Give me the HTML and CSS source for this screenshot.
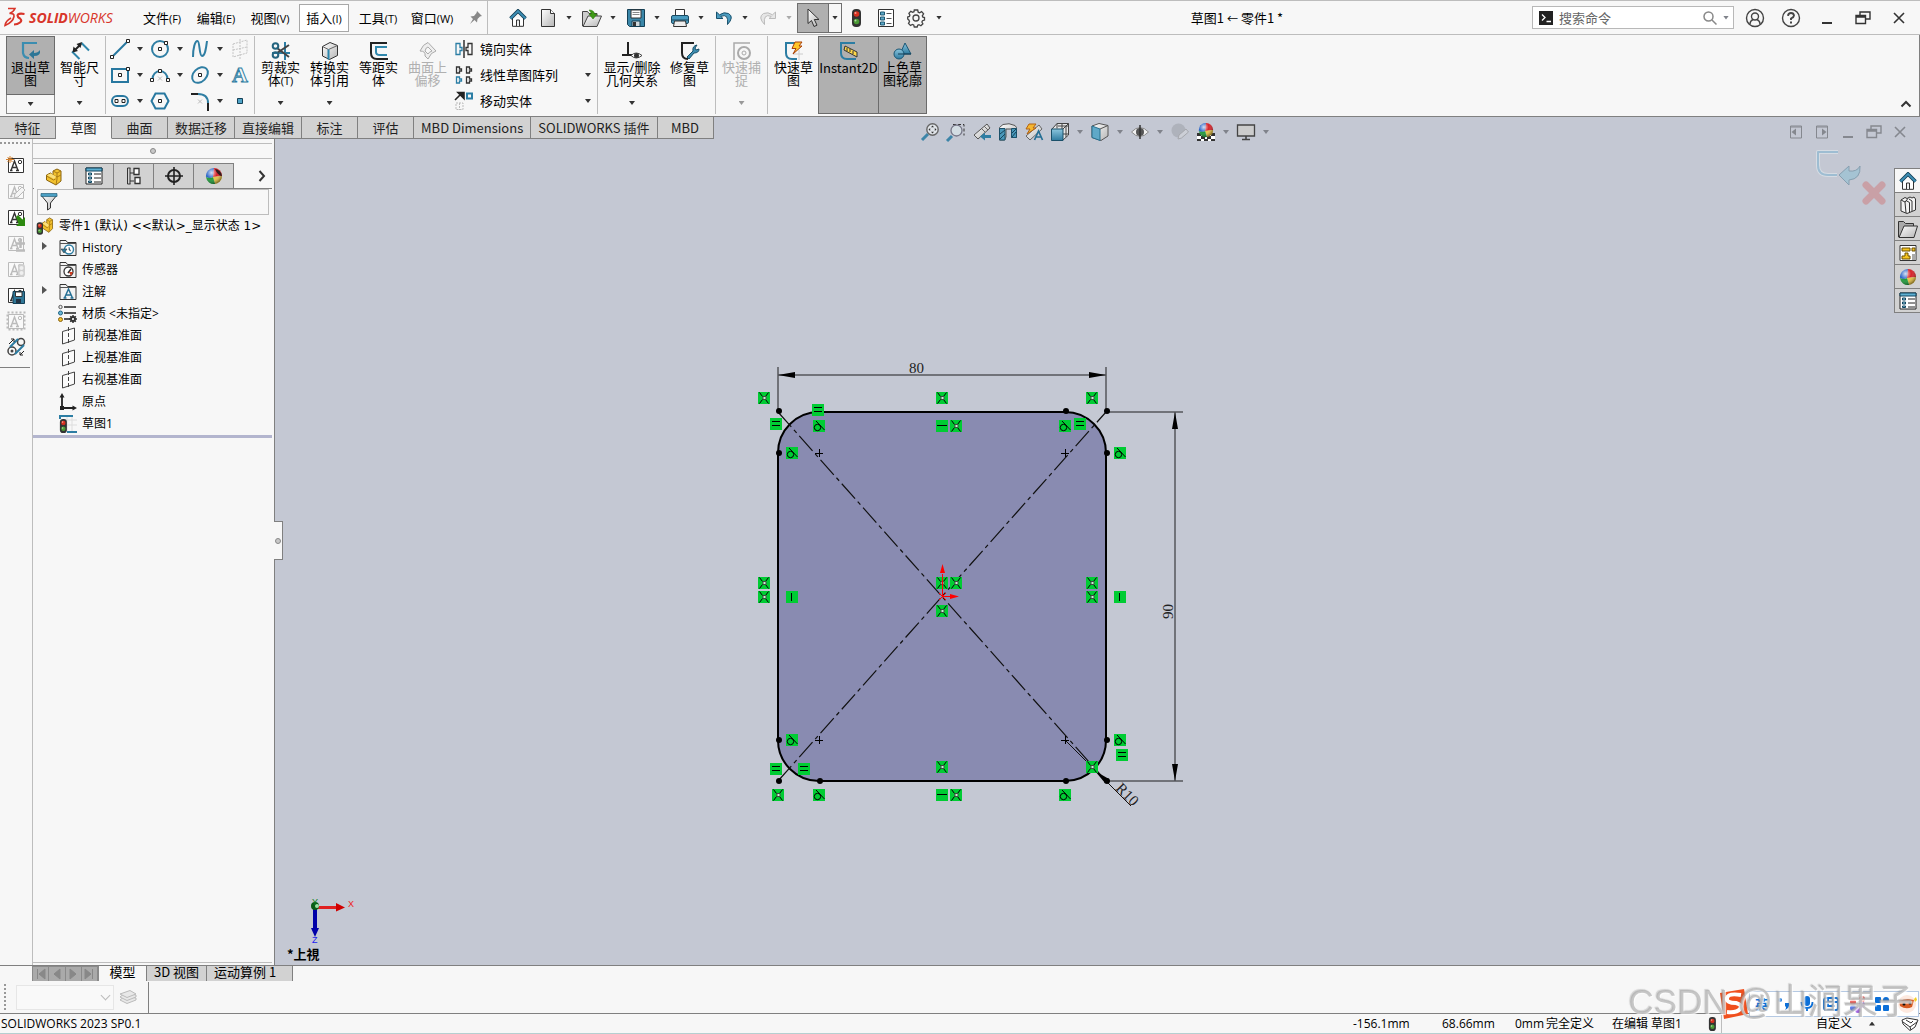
FILE: index.html
```html
<!DOCTYPE html>
<html lang="zh-CN">
<head>
	<meta charset="UTF-8">
	<meta name="viewport" content="width=device-width, initial-scale=1.0">
	<title>草图1 - 零件1</title>
	<link rel="stylesheet" href="styles.css">
</head>
<body>
	<!-- shared icons -->
	<svg class="defs" aria-hidden="true">
		<defs>
			<linearGradient id="metal" x1="0" y1="0" x2="1" y2="1"><stop offset="0" stop-color="#fff"/><stop offset="1" stop-color="#b5b5b5"/></linearGradient>
			<linearGradient id="blue" x1="0" y1="0" x2="0" y2="1"><stop offset="0" stop-color="#8cc6de"/><stop offset="1" stop-color="#2e7ba0"/></linearGradient>
			<radialGradient id="shine" cx=".35" cy=".3" r=".7"><stop offset="0" stop-color="#fff" stop-opacity=".8"/><stop offset=".5" stop-color="#fff" stop-opacity="0"/><stop offset="1" stop-color="#000" stop-opacity=".4"/></radialGradient>
		</defs>
		<symbol id="i-traffic" viewBox="0 0 10 18"><rect x="1" y="0" width="9" height="18" rx="4" fill="#333"/><circle cx="5.500" cy="5" r="2.800" fill="#d83020"/><circle cx="5.500" cy="12.500" r="2.800" fill="#4a9a35"/><circle cx="4.500" cy="4" r="1" fill="#f5a090"/><circle cx="4.500" cy="11.500" r="1" fill="#b5dba5"/></symbol>
		<symbol id="i-home" viewBox="0 0 18 18"><path d="M3.500 9v8.300h11V9" fill="#fff" stroke="#333"/><path d="M7.500 17v-6h3v6" fill="#eee" stroke="#333"/><path d="M1.500 9.500L9 2l7.500 7.500" fill="none" stroke="#123f57" stroke-width="3.600"/><path d="M1.500 9.500L9 2l7.500 7.500" fill="none" stroke="#3d8fb5" stroke-width="1.800"/></symbol>
		<symbol id="i-ball" viewBox="0 0 18 18"><path d="M9 1a8 8 0 0 0-8 9q4 2 7 0z" fill="#2d67c9"/><path d="M9 1a8 8 0 0 1 8 8l-9 1z" fill="#d6232a"/><path d="M17 9a8 8 0 0 1-7 8l-2-7z" fill="#e8c445"/><path d="M10 17a8 8 0 0 1-9-7q4 2 7 0z" fill="#1f9a3a"/><circle cx="9" cy="9" r="8" fill="url(#shine)"/></symbol>
		<symbol id="i-list" viewBox="0 0 18 18"><path d="M1 1h16v16H1z" fill="#fff" stroke="#222"/><path d="M1 1h16v3H1z" fill="#5eb0d2" stroke="#11455f"/><path d="M3.500 6h3v2h-3zM3.500 10h3v2h-3zM3.500 14h3v1.500h-3z" fill="#8cc8e0" stroke="#11455f"/><path d="M9 7h7M9 11h7M9 15h7" stroke="#222"/></symbol>
		<symbol id="i-part" viewBox="0 0 18 18"><path d="M1.500 7l4-2 2.500 2V3l4-2 4 2v10l-5 4-9.500-5z" fill="#f2c12e" stroke="#8a6410"/><path d="M8 7l4 2 4-2M12 5l4-2M12 5v6l-1 6M8 3l4 2M1.500 8l7 4 2-1" fill="none" stroke="#a87a15"/><path d="M2 7l4-1.500 5 3-2 2.500z" fill="#fbe07c"/></symbol>
		<symbol id="i-plane" viewBox="0 0 18 18"><path d="M3.500 4.500l12-3.500v12l-12 4z" fill="#fafafa" stroke="#444"/><path d="M9.500 0v18" stroke="#444" stroke-dasharray="4 2"/></symbol>
		<symbol id="i-folder" viewBox="0 0 18 18"><path d="M1 16.500V1.500h6l1.500 2H17v13z" fill="#f2f2f2" stroke="#333"/><path d="M1 4.500h16" stroke="#555"/></symbol>
		<symbol id="i-note" viewBox="0 0 18 18"><path d="M1.500 2.500h15v14h-15z" fill="#fff" stroke="#333"/><path d="M4 14.500L7.500 5 11 14.500M5 11.500h5M3 14.500h2.500M9 14.500h3" fill="none" stroke="#333" stroke-width="1.400"/><circle cx="13" cy="6" r="1.700" fill="none" stroke="#333"/></symbol>
		<symbol id="i-restore" viewBox="0 0 16 16"><path d="M5 5V2h10v7h-4M1 5.500h9.500v8H1zM1 7h9" fill="none" stroke="currentColor" stroke-width="1.400"/></symbol>
		<symbol id="i-close" viewBox="0 0 16 16"><path d="M3 3l10 10M13 3L3 13" stroke="currentColor" stroke-width="1.600"/></symbol>
		<symbol id="i-dot" viewBox="0 0 6 6"><circle cx="3" cy="3" r="2.500" fill="#c8c8c8" stroke="#888"/></symbol>
		<!-- sketch relations -->
		<symbol id="r-sym" viewBox="0 0 12 12"><path d="M0 0h12v12H0z" fill="#00cc33"/><path d="M1.500.500l3 4M10.500.500l-3 4M1.500 11.500l3-4M10.500 11.500l-3-4" stroke="#000"/><path d="M5 4.500h3v3H5z" fill="#c8f5d2" stroke="#444"/></symbol>
		<symbol id="r-eq" viewBox="0 0 12 12"><path d="M0 0h12v12H0z" fill="#00cc33"/><path d="M2 3.500h8M2 7.500h8" stroke="#000"/></symbol>
		<symbol id="r-tan" viewBox="0 0 12 12"><path d="M0 0h12v12H0z" fill="#00cc33"/><circle cx="4.500" cy="7.500" r="3.200" fill="none" stroke="#000"/><path d="M3 1l8.500 9" stroke="#000"/></symbol>
		<symbol id="r-hor" viewBox="0 0 12 12"><path d="M0 0h12v12H0z" fill="#00cc33"/><path d="M1 5.500h10" stroke="#000"/></symbol>
		<symbol id="r-ver" viewBox="0 0 12 12"><path d="M0 0h12v12H0z" fill="#00cc33"/><path d="M5.500 2v8" stroke="#000"/></symbol>
	</svg>

	<header class="menubar">
		<div class="logo">
			<svg width="22" height="22" viewBox="0 0 22 22" fill="none" stroke="#d8352a" stroke-width="1.600"><path d="M4 1.500h7Q9.500 5 5.500 6.500q5-.5 4.500 3Q9 15 1 18.500 1.500 14 7 11"/><path d="M20.500 7q-7-1-7 1.500 0 1.500 2.500 3 2.500 2 0 4-2.500 2-6 2" stroke-width="2.200"/></svg>
			<span><b>SOLID</b>WORKS</span>
		</div>
		<nav class="menus">
			<button>文件<small>(F)</small></button>
			<button>编辑<small>(E)</small></button>
			<button>视图<small>(V)</small></button>
			<button class="hover">插入<small>(I)</small></button>
			<button>工具<small>(T)</small></button>
			<button>窗口<small>(W)</small></button>
		</nav>
		<button class="pin" aria-label="固定菜单"><svg width="14" height="16" viewBox="0 0 14 16"><path d="M8 1l5 5-2 .5L8.500 9l-.5 3.500L5.500 10 1 14l3-5L1.500 6.500 5 6l2.500-3z" fill="#888"/></svg></button>

		<div class="quick">
			<button class="icon home" aria-label="首页"><svg width="18" height="18"><use href="#i-home"/></svg></button>
			<div class="splits">
				<div class="split">
					<button class="icon" aria-label="新建"><svg width="18" height="18" viewBox="0 0 18 18"><path d="M2.500.5h9l4 4v13h-13z" fill="url(#metal)" stroke="#333"/><path d="M11.500.5v4h4" fill="#fff" stroke="#333"/></svg></button>
					<button class="caret" aria-label="更多"></button>
				</div>
				<div class="split">
					<button class="icon" aria-label="打开"><svg width="20" height="18" viewBox="0 0 20 18"><path d="M.5 17V2.500h5l1.500 2h8V7" fill="#ccc" stroke="#444"/><path d="M1 17.500L6 7h13.500L15 17.500z" fill="url(#metal)" stroke="#444"/><path d="M7 1q5 0 5.500 4H15l-4 5-4-5h2.500Q9 3 7 1z" fill="#3f9a16" stroke="#2c7a0a" stroke-width=".6"/></svg></button>
					<button class="caret" aria-label="更多"></button>
				</div>
				<div class="split">
					<button class="icon" aria-label="保存"><svg width="18" height="18" viewBox="0 0 18 18"><path d="M.5.5h17v17h-15l-2-2z" fill="#3b87a9" stroke="#143f55"/><path d="M4 1h10v8H4z" fill="#fff" stroke="#333"/><path d="M5.500 3.500h7M5.500 5.500h7" stroke="#888"/><path d="M5 12h8v5.500H5z" fill="#cfd8dc" stroke="#143f55"/><path d="M6 13h3v4H6z" fill="#333"/></svg></button>
					<button class="caret" aria-label="更多"></button>
				</div>
				<div class="split">
					<button class="icon" aria-label="打印"><svg width="18" height="18" viewBox="0 0 18 18"><path d="M4.500 7V.5h9V7" fill="#fff" stroke="#333"/><rect x=".5" y="6.500" width="17" height="8" rx="1.500" fill="#4a9cc0" stroke="#1a4b63"/><path d="M1 11h16" stroke="#1a4b63"/><path d="M3.500 12h11l1 5.500h-13z" fill="#eee" stroke="#333"/></svg></button>
					<button class="caret" aria-label="更多"></button>
				</div>
				<div class="split">
					<button class="icon" aria-label="撤销"><svg width="18" height="18" viewBox="0 0 18 18"><path d="M1.500 3v6.500H8L5.700 7.400Q14 4 12.500 15.500 19.500 8 13.500 4.500 9 2.500 4.500 5.800z" fill="#4b9cc0" stroke="#17506c"/></svg></button>
					<button class="caret" aria-label="更多"></button>
				</div>
				<div class="split dim">
					<button class="icon" aria-label="重做"><svg width="18" height="18" viewBox="0 0 18 18"><path d="M16.500 3v6.500H10l2.300-2.100Q4 4 5.500 15.500-1.500 8 4.500 4.500 9 2.500 13.500 5.800z" fill="#e6e6e6" stroke="#bbb"/></svg></button>
					<button class="caret" aria-label="更多"></button>
				</div>
			</div>
			<div class="select-tool">
				<button class="on" aria-label="选择"><svg width="14" height="20" viewBox="0 0 14 20"><path d="M2 1v14.500l3.500-3 2.500 6 3-1.300-2.700-5.700H13z" fill="url(#metal)" stroke="#333"/></svg></button>
				<button aria-label="更多"><i class="caret"></i></button>
			</div>
			<div class="extras">
				<button class="icon" aria-label="重建"><svg width="10" height="18"><use href="#i-traffic"/></svg></button>
				<button class="icon" aria-label="文件属性"><svg width="18" height="18" viewBox="0 0 18 18"><path d="M1.500.5h15v17h-15z" fill="#fff" stroke="#333"/><path d="M3.500 3h4v3h-4zM3.500 8h4v3h-4zM3.500 13h4v3h-4z" fill="#5fa8c7" stroke="#1d5873"/><path d="M9.500 4.500h5M9.500 9.500h5M9.500 14.500h5" stroke="#555"/></svg></button>
				<button class="icon" aria-label="选项"><svg width="18" height="18" viewBox="0 0 18 18" fill="none" stroke="#444" stroke-width="1.300"><path d="M7.300 1h3.400l.5 2.200 1.400.6 2-1.200 2 2.200-1.300 2 .6 1.300 1.600.5v2.500l-2 .6-.6 1.300 1 1.800-2 2-1.900-1.100-1.300.6-.5 1.700H7.300l-.6-2-1.400-.5-1.800 1-2-2 1-1.900-.5-1.400L.700 10V8l1.700-.6.5-1.300-1-1.800 1.900-2 1.900 1 1.300-.6z"/><circle cx="9" cy="9" r="3"/></svg></button>
				<button class="caret" aria-label="更多"></button>
			</div>
		</div>

		<div class="doc-title">草图1 <small>←</small> 零件1 *</div>

		<label class="search">
			<svg width="14" height="14" viewBox="0 0 14 14"><path d="M0 0h14v14H0z" fill="#222"/><path d="M3 3.500l3 3-3 3M7.500 10.500H12" fill="none" stroke="#fff" stroke-width="1.300"/></svg>
			<input type="text" placeholder="搜索命令" aria-label="搜索命令">
			<svg width="14" height="14" viewBox="0 0 14 14" fill="none" stroke="#888" stroke-width="1.500"><circle cx="5.500" cy="5.500" r="4.500"/><path d="M9 9l4.500 4.500"/></svg>
			<i class="caret grey"></i>
		</label>
		<div class="win-user">
			<button aria-label="登录"><svg width="20" height="20" viewBox="0 0 20 20" fill="none" stroke="#444" stroke-width="1.400"><circle cx="10" cy="10" r="8.500"/><circle cx="10" cy="8.500" r="3.500"/><path d="M5 16q0-3 3-4.500M15 16q0-3-3-4.500"/></svg></button>
			<button aria-label="帮助"><svg width="20" height="20" viewBox="0 0 20 20" fill="none" stroke="#444"><circle cx="10" cy="10" r="8.500" stroke-width="1.400"/><path d="M7 7.800Q7.300 5 10 5t3 2.500Q13 9 10 10.500V12" stroke-width="1.900"/><path d="M10 13.500v2" stroke-width="2"/></svg></button>
		</div>
		<div class="win-ctl">
			<button aria-label="最小化"><svg width="16" height="16" viewBox="0 0 16 16"><path d="M3 13h10" stroke="currentColor" stroke-width="2"/></svg></button>
			<button aria-label="还原"><svg width="16" height="16"><use href="#i-restore"/></svg></button>
			<button aria-label="关闭"><svg width="16" height="16"><use href="#i-close"/></svg></button>
		</div>
	</header>

	<section class="ribbon">
		<div class="cmd exit">
			<button><svg width="20" height="18" viewBox="0 0 20 18"><path d="M16 1H2v10q1 5 6 5" fill="none" stroke="#3b8db0" stroke-width="2.200"/><path d="M19 8q1 6-6 6v3l-5-4.500L13 8v3q4 0 6-3z" fill="#2c7697"/></svg><span>退出草图</span></button>
			<button class="drop" aria-label="更多"><i class="caret"></i></button>
		</div>
		<button class="cmd"><svg width="18" height="18" viewBox="0 0 18 18"><path d="M1 9.500L8.500 17M10.500 1L18 8.500" stroke="#2f86ab" stroke-width="2"/><path d="M3 9l7-7" stroke="#222" stroke-width="2"/><path d="M1.500 10.500l1-6 4.500 4.500zM11 0l-1.500 6-4-4z" fill="#222"/></svg><span>智能尺寸</span><i class="caret"></i></button>
		<hr>
		<div class="sketch-tools">
			<button aria-label="直线"><svg width="20" height="20" viewBox="0 0 20 20"><path d="M2 18L18 2" stroke="#2878a0" stroke-width="2"/><path d="M.5 16.500h3v3h-3zM16.500.5h3v3h-3z" fill="#fff" stroke="#222"/></svg></button><i class="caret"></i>
			<button aria-label="圆"><svg width="20" height="20" viewBox="0 0 20 20"><circle cx="10" cy="10" r="8" fill="none" stroke="#2f7ea3" stroke-width="2"/><path d="M8.500 8.500h3v3h-3zM14.500 2.500h3v3h-3z" fill="#fff" stroke="#222"/></svg></button><i class="caret"></i>
			<button aria-label="样条曲线"><svg width="20" height="20" viewBox="0 0 20 20"><path d="M3 18C3 9 5 2 7.500 2S9 17 12 17 16 10 17 2" fill="none" stroke="#2f7ea3" stroke-width="2"/></svg></button><i class="caret"></i>
			<button aria-label="基准面"><svg width="20" height="20" viewBox="0 0 20 20"><path d="M3 5l14-4v13L3 18zM10 0v20M3 11l14-3" fill="none" stroke="#c4c4c4" stroke-dasharray="2 1"/></svg></button>

			<button aria-label="矩形"><svg width="20" height="20" viewBox="0 0 20 20"><path d="M2 4h16v13H2z" fill="none" stroke="#2878a0" stroke-width="2"/><path d="M8.500 8.500h3v3h-3zM16.500 2.500h3v3h-3z" fill="#fff" stroke="#222"/></svg></button><i class="caret"></i>
			<button aria-label="圆弧"><svg width="20" height="20" viewBox="0 0 20 20"><path d="M2.500 14a7.500 8 0 0 1 15 0" fill="none" stroke="#2f7ea3" stroke-width="2"/><path d="M.5 13.500h3v3h-3zM16.500 13.500h3v3h-3zM8.500 4.500h3v3h-3z" fill="#fff" stroke="#222"/><path d="M8 11.500l4 4M12 11.500l-4 4" stroke="#bbb"/></svg></button><i class="caret"></i>
			<button aria-label="椭圆"><svg width="20" height="20" viewBox="0 0 20 20"><ellipse cx="10" cy="10" rx="9" ry="6.500" transform="rotate(-45 10 10)" fill="none" stroke="#2f7ea3" stroke-width="2"/><path d="M8.500 8.500h3v3h-3z" fill="#fff" stroke="#222"/></svg></button><i class="caret"></i>
			<button class="letter">A</button>

			<button aria-label="槽口"><svg width="20" height="20" viewBox="0 0 20 20"><rect x="2" y="5" width="16" height="10" rx="5" fill="none" stroke="#2878a0" stroke-width="2"/><path d="M5 8.500h3v3H5zM12 8.500h3v3h-3z" fill="#fff" stroke="#222"/></svg></button><i class="caret"></i>
			<button aria-label="多边形"><svg width="20" height="20" viewBox="0 0 20 20"><path d="M1.500 10l4-7.500h9l4 7.500-4 7.500h-9z" fill="none" stroke="#2878a0" stroke-width="2"/><path d="M8.500 8.500h3v3h-3z" fill="#fff" stroke="#222"/></svg></button><i></i>
			<button aria-label="圆角"><svg width="20" height="20" viewBox="0 0 20 20"><path d="M1 3h7M18 12v8" stroke="#222" stroke-width="2"/><path d="M8 3q10 0 10 9" fill="none" stroke="#2f7ea3" stroke-width="2"/><path d="M8 8.500l4 4M12 8.500l-4 4" stroke="#bbb"/></svg></button><i class="caret"></i>
			<button aria-label="点"><svg width="20" height="20" viewBox="0 0 20 20"><path d="M7.500 7.500h5v5h-5z" fill="#4fa4c8" stroke="#143f55"/></svg></button>
		</div>
		<hr>
		<button class="cmd"><svg width="20" height="18" viewBox="0 0 20 18"><path d="M14 0v18M1 11h18" stroke="#2c7da3" stroke-width="2"/><path d="M18 3L6 11M18 15L6 6" stroke="#444" stroke-width="2"/><circle cx="4.500" cy="4" r="2.800" fill="none" stroke="#24647f" stroke-width="2"/><circle cx="4.500" cy="13" r="2.800" fill="none" stroke="#24647f" stroke-width="2"/></svg><span>剪裁实体<small>(T)</small></span><i class="caret"></i></button>
		<button class="cmd"><svg width="18" height="18" viewBox="0 0 18 18"><path d="M1.500 4.500L9 .5l7.500 3v10l-8 4-7-3.500z" fill="url(#metal)" stroke="#333"/><path d="M1.500 4.500l6 3 9-4" fill="none" stroke="#666"/><path d="M7.500 7.500v10" stroke="#2b86ad" stroke-width="2"/></svg><span>转换实体引用</span><i class="caret"></i></button>
		<button class="cmd"><svg width="18" height="18" viewBox="0 0 18 18"><path d="M17 1H1v10q0 6 6 6h11" fill="none" stroke="#222" stroke-width="2"/><path d="M17 5H6v5q0 3 4 3h7" fill="none" stroke="#3188ad" stroke-width="2"/></svg><span>等距实体</span></button>
		<button class="cmd off"><svg width="18" height="18" viewBox="0 0 18 18"><path d="M1 9Q4 2 9 .500L17 9q-5 1-8 8l-3-3q1-5-5-5z" fill="#eee" stroke="#aaa"/><path d="M6 9q1-4 3-4l4 4q-3 1-4 3z" fill="#f7f7f7" stroke="#aaa"/></svg><span>曲面上偏移</span></button>
		<div class="cmd-list">
			<button><svg width="18" height="18" viewBox="0 0 18 18"><path d="M1 3.500h4v4h2v3H5v4H1z" fill="none" stroke="#2b7ea5" stroke-width="1.300"/><path d="M9 0v18" stroke="#222" stroke-width="1.400"/><path d="M17 3.500h-4v4h-2v3h2v4h4z" fill="none" stroke="#333" stroke-width="1.300"/></svg><span>镜向实体</span></button>
			<button><svg width="18" height="18" viewBox="0 0 18 18" fill="none" stroke="#333" stroke-width="1.300"><path d="M1.500 1h3v2h2v2h-2v2h-3zM11.500 1h3v2h2v2h-2v2h-3zM11.500 11h3v2h2v2h-2v2h-3z"/><path d="M1.500 11h3v2h2v2h-2v2h-3z" stroke="#2b7ea5"/></svg><span>线性草图阵列</span><i class="caret"></i></button>
			<button><svg width="18" height="18" viewBox="0 0 18 18"><path d="M0 8l5-5M3 .500h6v6z" fill="#222" stroke="#222" stroke-width="1.600"/><path d="M12 1.500h5v5h-5z" fill="none" stroke="#2b7ea5" stroke-width="2"/><path d="M1 11h7v6.500H1zM4.500 11v7" fill="none" stroke="#bbb" stroke-dasharray="2 1"/></svg><span>移动实体</span><i class="caret"></i></button>
		</div>
		<hr>
		<button class="cmd relations"><svg width="20" height="18" viewBox="0 0 20 18"><path d="M6 0v13M0 13h12" stroke="#222" stroke-width="2"/><path d="M9 13.500q5-5 11 0-6 5-11 0z" fill="#fff" stroke="#444"/><circle cx="14.500" cy="13.500" r="2.500" fill="#333"/></svg><span>显示/删除几何关系</span><i class="caret"></i></button>
		<button class="cmd"><svg width="18" height="18" viewBox="0 0 18 18"><path d="M13 1H1v10q0 6 6 6" fill="none" stroke="#222" stroke-width="2"/><path d="M8 17l-2-2 6-6q-1-5 4-6l-2 3 1 2 3-1q0 4-5 4z" fill="#3d8db0" stroke="#1b5069"/></svg><span>修复草图</span></button>
		<hr>
		<button class="cmd off"><svg width="18" height="18" viewBox="0 0 18 18" fill="none" stroke="#aaa"><path d="M1 18V1h16" stroke-width="1.500"/><circle cx="11" cy="11" r="6" stroke-width="2"/><circle cx="11" cy="11" r="2"/></svg><span>快速捕捉</span><i class="caret"></i></button>
		<hr>
		<button class="cmd"><svg width="18" height="18" viewBox="0 0 18 18"><path d="M12 1H1v10q0 6 6 6h5" fill="none" stroke="#2c7da3" stroke-width="2"/><path d="M8 12h10M14 8v10" stroke="#ccc"/><path d="M10 0h7l-3 4h3L8 12l3-5.500H7z" fill="#ffc629" stroke="#a8400c"/></svg><span>快速草图</span></button>
		<button class="cmd instant on"><svg width="18" height="18" viewBox="0 0 18 18"><path d="M15 1H1v10q0 6 6 6h9" fill="none" stroke="#2c7da3" stroke-width="2"/><path d="M5 4l12 6v5L4 8z" fill="#ffd94a" stroke="#333"/><path d="M7 6v3M10 7v3M13 9v3" stroke="#333"/></svg><span>Instant2D</span></button>
		<button class="cmd on"><svg width="18" height="18" viewBox="0 0 18 18"><path d="M11 1l6 11H6z" fill="url(#blue)" stroke="#1b5674"/><circle cx="5" cy="12" r="5" fill="url(#blue)" stroke="#1b5674"/><path d="M4 12h13" stroke="#143f55"/></svg><span>上色草图轮廓</span></button>
		<button class="fold" aria-label="折叠"><svg width="12" height="8" viewBox="0 0 12 8"><path d="M1.500 6.500L6 2l4.500 4.500" fill="none" stroke="#333" stroke-width="2"/></svg></button>
	</section>

	<main class="workspace">
		<nav class="tabs">
			<button>特征</button>
			<button class="active">草图</button>
			<button>曲面</button>
			<button>数据迁移</button>
			<button>直接编辑</button>
			<button>标注</button>
			<button>评估</button>
			<button>MBD Dimensions</button>
			<button>SOLIDWORKS 插件</button>
			<button>MBD</button>
		</nav>

		<div class="panes">
			<aside class="notebar">
				<button aria-label="新建块"><svg width="18" height="18" viewBox="0 0 18 18"><use href="#i-note"/><path d="M3 0v7M-1 3.500h8M.5 1l5 5M5.500 1l-5 5" stroke="#d9822b"/></svg></button>
				<button class="off" aria-label="编辑块"><svg width="18" height="18" viewBox="0 0 18 18"><use href="#i-note"/><path d="M7 16l1-4 7-7 3 3-7 7z" fill="#eee" stroke="#333"/></svg></button>
				<button aria-label="插入块"><svg width="18" height="18" viewBox="0 0 18 18"><use href="#i-note"/><path d="M9 9l2-2 4.500 4.500L18 9v9H9l2.500-2.500z" fill="#2d8a10"/></svg></button>
				<button class="off" aria-label="添加移除"><svg width="18" height="18" viewBox="0 0 18 18"><use href="#i-note"/><path d="M9 9.500h9M13.500 5v9M9 16.500h9" stroke="#333" stroke-width="2.500"/></svg></button>
				<button class="off" aria-label="重建块"><svg width="18" height="18" viewBox="0 0 18 18"><use href="#i-note"/><rect x="11" y="4" width="7" height="13" rx="3" fill="#777"/><circle cx="14.500" cy="8" r="2" fill="#ddd"/><circle cx="14.500" cy="13" r="2" fill="#ddd"/></svg></button>
				<button aria-label="保存块"><svg width="18" height="18" viewBox="0 0 18 18"><use href="#i-note"/><path d="M6 5.500h11.500v12H6z" fill="#2f7797" stroke="#143f55"/><path d="M8.500 6h6.500v4.500H8.500z" fill="#fff" stroke="#333"/><path d="M9 13h5v4H9z" fill="#234"/></svg></button>
				<button class="off" aria-label="爆炸块"><svg width="18" height="18" viewBox="0 0 18 18"><use href="#i-note"/><path d="M.5.500h17v17H.5z" fill="none" stroke="#333" stroke-width="2" stroke-dasharray="2 2"/></svg></button>
				<button aria-label="皮带"><svg width="18" height="18" viewBox="0 0 18 18" fill="none"><circle cx="5" cy="13" r="4" stroke="#444" stroke-width="1.500"/><circle cx="5" cy="13" r="1.500" fill="#444"/><circle cx="14" cy="4" r="3.500" stroke="#444" stroke-width="1.500"/><path d="M3 9l8-8M8 16l9-9" stroke="#2c7da3" stroke-width="2"/><path d="M2 6l5-5M4 1h3v3M17 13l-4 4M13 14v3h3" stroke="#222"/></svg></button>
			</aside>

			<aside class="manager">
				<div class="grip"><svg width="6" height="6"><use href="#i-dot"/></svg></div>
				<div class="manager-tabs">
					<button class="active" aria-label="特征树"><svg width="18" height="18"><use href="#i-part"/></svg></button>
					<button aria-label="属性"><svg width="18" height="18"><use href="#i-list"/></svg></button>
					<button aria-label="配置"><svg width="18" height="18" viewBox="0 0 18 18" fill="none" stroke="#333"><path d="M2.500 1v16M5 1v16M2.500 1h3M2.500 17h3"/><path d="M5 6h4M5 14h4"/><path d="M9 1.500h5v6H9zM10 10.500h5v6h-5z" fill="#fff" stroke-width="1.300"/></svg></button>
					<button aria-label="尺寸专家"><svg width="20" height="18" viewBox="0 0 20 18"><circle cx="10" cy="9" r="6" fill="none" stroke="#222" stroke-width="2"/><path d="M10 0v18M1 9h18" stroke="#222" stroke-width="1.600"/></svg></button>
					<button aria-label="外观"><svg width="18" height="18" viewBox="0 0 18 18"><use href="#i-ball"/><path d="M10 2q6 1 7 7-4 0-7-7z" fill="#331d1d"/></svg></button>
					<button class="more" aria-label="更多"><svg width="8" height="12" viewBox="0 0 8 12"><path d="M1.500 1L6 6l-4.500 5" fill="none" stroke="#333" stroke-width="2"/></svg></button>
				</div>
				<label class="filter">
					<svg width="18" height="20" viewBox="0 0 18 20"><path d="M1 3l6.500 8v7l3-2v-5L17 3z" fill="url(#metal)" stroke="#333"/><path d="M1 1.500h16v3H1z" fill="#4ba0c4" stroke="#14506c" stroke-width=".6"/></svg>
					<input type="text" aria-label="过滤">
				</label>
				<ul class="tree">
					<li class="root"><svg width="18" height="18" viewBox="0 0 18 18"><g transform="translate(5 0) scale(.72 .9)"><use href="#i-part" width="18" height="18"/></g><use href="#i-traffic" x="0" y="5" width="7" height="13"/></svg><span>零件1 (默认) &lt;&lt;默认&gt;_显示状态 1&gt;</span></li>
					<li class="open"><svg width="18" height="18" viewBox="0 0 18 18"><use href="#i-folder"/><circle cx="10" cy="10.500" r="4.500" fill="#fff" stroke="#2f7ea3" stroke-width="1.400"/><path d="M10 8v3l2 1M2 10h6l-3 4z" fill="#2f7ea3" stroke="#333" stroke-width=".6"/></svg><span>History</span></li>
					<li><svg width="18" height="18" viewBox="0 0 18 18"><use href="#i-folder"/><circle cx="9.500" cy="10.500" r="4.500" fill="#fff" stroke="#333" stroke-width="1.300"/><path d="M9 12l3-4" stroke="#333" stroke-width="1.500"/><path d="M10 11h4l-2 4z" fill="#d23a1e"/></svg><span>传感器</span></li>
					<li class="open"><svg width="18" height="18" viewBox="0 0 18 18"><use href="#i-folder"/><path d="M5.500 15l4-9 4 9M7 12h5M4.500 15h3M11.500 15h3" fill="none" stroke="#256f94" stroke-width="1.500"/></svg><span>注解</span></li>
					<li><svg width="18" height="18" viewBox="1 0 18 18"><path d="M6 2h12M6 8h12M6 14h6" stroke="#222" stroke-width="1.500"/><circle cx="2.500" cy="2" r="1.700" fill="#eee" stroke="#555"/><circle cx="2.500" cy="8" r="2" fill="#6bb6d6" stroke="#1f6585"/><circle cx="2.500" cy="14.500" r="2" fill="#f2c12e" stroke="#8a6410"/><path d="M15 10v8M11 14h8M12.200 11.200l5.600 5.600M17.800 11.200l-5.600 5.600" stroke="#333" stroke-width="1.500"/><circle cx="15" cy="14" r="2" fill="#fff" stroke="#333" stroke-width="1.800"/></svg><span>材质 &lt;未指定&gt;</span></li>
					<li><svg width="18" height="18"><use href="#i-plane"/></svg><span>前视基准面</span></li>
					<li><svg width="18" height="18"><use href="#i-plane"/></svg><span>上视基准面</span></li>
					<li><svg width="18" height="18"><use href="#i-plane"/></svg><span>右视基准面</span></li>
					<li><svg width="18" height="18" viewBox="0 0 18 18"><path d="M3 3v12h12" fill="none" stroke="#222" stroke-width="1.800"/><path d="M3 0l2.500 4.500h-5zM18 15l-4.500 2.500v-5zM1 13h4v4H1z" fill="#222"/></svg><span>原点</span></li>
					<li><svg width="18" height="18" viewBox="0 0 18 18"><path d="M5 5h13M5 10h13M8 2v14M13 2v14" stroke="#ddd"/><path d="M1 4V1h13M8 17h10" fill="none" stroke="#2c7da3" stroke-width="2"/><use href="#i-traffic" x="0" y="4" width="8" height="14"/></svg><span>草图1</span></li>
				</ul>
				<div class="rollback"></div>
				<div class="manager-foot"></div>
			</aside>

			<div class="viewport">
				<button class="handle" aria-label="收起面板"><svg width="6" height="6"><use href="#i-dot"/></svg></button>

				<svg class="sketch" width="460" height="470" viewBox="740 350 460 470">
					<path d="M819 412H1065A41 41 0 0 1 1106 453V740A41 41 0 0 1 1065 781H819A41 41 0 0 1 778 740V453A41 41 0 0 1 819 412z" fill="#898bb1" stroke="#000" stroke-width="2"/>
					<path d="M778 412L942 596.500L1106 781M778 781L942 596.500L1106 412" fill="none" stroke="#111" stroke-width="1.200" stroke-dasharray="20 4 4 4"/>
					<!-- dimensions -->
					<g stroke="#55575c" stroke-width="1.500" fill="none">
						<path d="M778 367v45M1106 367v45M778 375h328M1106 412h77M1106 781h77M1175 412v369"/>
						<path d="M1065 740l66 66" stroke="#111" stroke-width="1"/>
					</g>
					<path d="M778 375l17-3v6zM1106 375l-17-3v6zM1175 412l-3 17h6zM1175 781l-3-17h6zM1095 771l14 8-4 4z"/>
					<g class="dim-text">
						<text x="909" y="373">80</text>
						<text transform="translate(1173 619) rotate(-90)">90</text>
						<text transform="translate(1115 789) rotate(45)">R10</text>
					</g>
					<g fill="#000">
						<circle cx="779" cy="411" r="3"/><circle cx="1066" cy="411" r="3"/><circle cx="1107" cy="411" r="3"/>
						<circle cx="779" cy="453" r="3"/><circle cx="1107" cy="453" r="3"/><circle cx="779" cy="740" r="3"/><circle cx="1107" cy="740" r="3"/>
						<circle cx="779" cy="781" r="3"/><circle cx="820" cy="781" r="3"/><circle cx="1066" cy="781" r="3"/><circle cx="1107" cy="781" r="3"/>
					</g>
					<path d="M815 453.500h8M819.500 449v8M1061 453.500h8M1065.500 449v8M815 740.500h8M819.500 736v8M1061 740.500h8M1065.500 736v8" stroke="#000"/>
					<!-- relations -->
					<g>
						<use href="#r-sym" x="758" y="392" width="12" height="12"/><use href="#r-sym" x="936" y="392" width="12" height="12"/><use href="#r-sym" x="1086" y="392" width="12" height="12"/>
						<use href="#r-eq" x="812" y="404" width="12" height="12"/><use href="#r-eq" x="770" y="418" width="12" height="12"/><use href="#r-eq" x="1074" y="418" width="12" height="12"/>
						<use href="#r-tan" x="813" y="420" width="12" height="12"/><use href="#r-tan" x="1059" y="420" width="12" height="12"/>
						<use href="#r-hor" x="936" y="420" width="12" height="12"/><use href="#r-sym" x="950" y="420" width="12" height="12"/>
						<use href="#r-tan" x="786" y="447" width="12" height="12"/><use href="#r-tan" x="1114" y="447" width="12" height="12"/>
						<use href="#r-sym" x="758" y="577" width="12" height="12"/><use href="#r-sym" x="758" y="591" width="12" height="12"/><use href="#r-ver" x="786" y="591" width="12" height="12"/>
						<use href="#r-sym" x="936" y="577" width="12" height="12"/><use href="#r-sym" x="950" y="577" width="12" height="12"/><use href="#r-sym" x="936" y="605" width="12" height="12"/>
						<use href="#r-sym" x="1086" y="577" width="12" height="12"/><use href="#r-sym" x="1086" y="591" width="12" height="12"/><use href="#r-ver" x="1114" y="591" width="12" height="12"/>
						<use href="#r-tan" x="786" y="734" width="12" height="12"/><use href="#r-tan" x="1114" y="734" width="12" height="12"/><use href="#r-eq" x="1116" y="749" width="12" height="12"/>
						<use href="#r-eq" x="770" y="763" width="12" height="12"/><use href="#r-eq" x="798" y="763" width="12" height="12"/><use href="#r-sym" x="936" y="761" width="12" height="12"/><use href="#r-sym" x="1086" y="761" width="12" height="12"/>
						<use href="#r-sym" x="772" y="789" width="12" height="12"/><use href="#r-tan" x="813" y="789" width="12" height="12"/><use href="#r-hor" x="936" y="789" width="12" height="12"/><use href="#r-sym" x="950" y="789" width="12" height="12"/><use href="#r-tan" x="1059" y="789" width="12" height="12"/>
					</g>
					<!-- origin -->
					<g stroke="#f00" fill="#f00">
						<path d="M942.500 596v-22M942 596.500h10M939 593l7 7M946 593l-7 7"/>
						<path d="M942.500 564l2.500 9h-5zM959 596.500l-9 2.500v-5z" stroke="none"/>
					</g>
				</svg>

				<div class="triad">
					<svg width="60" height="50" viewBox="300 895 60 50">
						<path d="M318 907.500h20" stroke="#e02020" stroke-width="3"/><path d="M336 903l9 4.500-9 4z" fill="#d00000"/>
						<path d="M315 908v22" stroke="#0000a8" stroke-width="4"/><path d="M311 928h8l-4 9z" fill="#0000a8"/>
						<circle cx="315" cy="906" r="4" fill="#0a5c14"/><circle cx="317" cy="906" r="2" fill="#9fe0a5"/>
						<text x="348" y="907" fill="#f02020">X</text><text x="312" y="943" fill="#2020f0">Z</text><text x="312" y="905" fill="#108020">Y</text>
					</svg>
					<span>*上視</span>
				</div>

				<div class="confirm">
					<svg width="72" height="58" viewBox="1815 149 72 58"><g fill="none" stroke-linejoin="round"><path d="M1838 152h-20v13q0 10 10 10h9" stroke="#d6dce3" stroke-width="4"/><path d="M1838 152h-20v13q0 10 10 10h9" stroke="#9ebdd2" stroke-width="2"/></g><path d="M1839 175l10-9v5q8 1 11-5 1 13-11 14v5z" fill="#a5c3d3" stroke="#879fb0"/><path d="M1866 185l16 16M1882 185l-16 16" stroke="#c9a0a6" stroke-width="7" stroke-linecap="round"/></svg>
				</div>

				<nav class="taskpane">
					<button class="active" aria-label="资源"><svg width="18" height="18"><use href="#i-home"/></svg></button>
					<button aria-label="设计库"><svg width="18" height="18" viewBox="0 0 18 18" fill="#f4f4f4" stroke="#333"><path d="M2 4l4-2.500 2 1L11 1l2 1 2-1 1.500 2v11L8 17.500 2 15z"/><path d="M2 4l4 2 1 11M6 6l3-3.500M7 4.500l3.500 2v10M10 3l3 2v10"/></svg></button>
					<button aria-label="文件探索器"><svg width="20" height="18" viewBox="0 0 20 18"><path d="M.5 17V1.500h5l2 2h8V6" fill="#aaa" stroke="#333"/><path d="M1 17.500L6 6h13.500L16 17.500z" fill="url(#metal)" stroke="#333"/></svg></button>
					<button aria-label="视图调色板"><svg width="18" height="18" viewBox="0 0 18 18"><path d="M1 1.500h16v15H1z" fill="#fff" stroke="#333"/><path d="M3 4h8v3H3zM13 4h3v3h-3zM6 9h3v3h2v3H3v-3h3z" fill="#f6c520" stroke="#6d5100"/><path d="M13 10h4v6h-4z" fill="#aaa"/></svg></button>
					<button aria-label="外观布景"><svg width="18" height="18"><use href="#i-ball"/></svg></button>
					<button aria-label="自定义属性"><svg width="18" height="18"><use href="#i-list"/></svg></button>
				</nav>
			</div>
		</div>

		<!-- view toolbar, floats over the graphics area -->
		<div class="hud">
			<button aria-label="整屏显示"><svg width="18" height="18" viewBox="0 0 18 18"><path d="M1 17l6-6" stroke="#3d85a8" stroke-width="3"/><circle cx="11.500" cy="6.500" r="5.700" fill="#dfe3e8" stroke="#666" stroke-width="1.400"/><path d="M11.500 2.500l1.500 1.700h-3zM11.500 10.500l1.500-1.700h-3zM7.500 6.500l1.700-1.500v3zM15.500 6.500l-1.700-1.500v3z" fill="#333"/></svg></button>
			<button aria-label="局部放大"><svg width="18" height="18" viewBox="0 0 18 18"><path d="M6 1.500h11v11" fill="none" stroke="#333" stroke-dasharray="3 2"/><path d="M0 18l5-5" stroke="#3d85a8" stroke-width="3"/><circle cx="9.500" cy="7.500" r="5.500" fill="#d3dde3" stroke="#778" stroke-width="1.300"/></svg></button>
			<button aria-label="上一视图"><svg width="18" height="18" viewBox="0 0 18 18"><path d="M1 12L14 1l3 4L5 16z" fill="url(#metal)" stroke="#555"/><path d="M8 5l4 4M11 3l4 4" stroke="#666"/><path d="M7 13.500l5-4v2.500h6v3h-6v2.500z" fill="#2f7ea3"/></svg></button>
			<button aria-label="剖面视图"><svg width="18" height="18" viewBox="0 0 18 18"><path d="M.5 4.500L4 1.500q6-2 12 1l1.500 2v10h-5V6H7v8l-1.500 3h-5z" fill="url(#metal)" stroke="#555"/><path d="M.5 5.500H6v11.500H.5zM12.500 5.500h5v9h-5z" fill="#4a98ba" stroke="#1b5069"/><path d="M1 11l5-4M1 16l5-5M13 10l4-4M13 14l4-5" stroke="#17445a"/></svg></button>
			<button aria-label="动态注解视图"><svg width="18" height="18" viewBox="0 0 18 18"><path d="M1 13L14 2l3 4L5 17z" fill="url(#metal)" stroke="#666"/><path d="M4 1h7L8 5h3L2 11l3-5H1z" fill="#f5b731" stroke="#b36210"/><path d="M9.500 17l4-9 4 9M11 14h5" fill="none" stroke="#256f94" stroke-width="1.700"/></svg></button>
			<button aria-label="视图定向"><svg width="18" height="18" viewBox="0 0 18 18"><path d="M1 6l5-5.500h11.500V12L12 17" fill="#e8e8e8" stroke="#444"/><path d="M6 .5v5M12 6l5.500-5.500M11 1v5M7 3h10M15 3v11M12 11l5 0" stroke="#444"/><path d="M.5 6H12v11.500H.5z" fill="url(#blue)" stroke="#1b5069"/></svg></button>
			<i class="caret grey"></i>
			<button aria-label="显示样式"><svg width="18" height="18" viewBox="0 0 18 18"><path d="M1 3l7-2.500 9 2V13l-7 4.500-9-3z" fill="url(#metal)" stroke="#555"/><path d="M1 3l8 3v11.500l-8-3z" fill="#5fa9c8" stroke="#28708f"/><path d="M9 6l8-3.500" stroke="#555"/></svg></button>
			<i class="caret grey"></i>
			<button aria-label="隐藏项目"><svg width="18" height="18" viewBox="0 0 18 18"><path d="M.5 9Q9 0 17.500 9 9 18 .5 9z" fill="#f0f0f0" stroke="#8a8a8a"/><circle cx="9" cy="9" r="4" fill="#555"/><path d="M9 2v14" stroke="#333" stroke-width="1.500"/></svg></button>
			<i class="caret grey"></i>
			<button class="faded" aria-label="编辑外观"><svg width="18" height="18" viewBox="0 0 18 18"><circle cx="7.500" cy="7.500" r="7" fill="#9a9da5"/><path d="M7 16l1-4 7-6 2.500 3-7 6z" fill="#d5d7dc" stroke="#888"/></svg></button>
			<button aria-label="应用布景"><svg width="18" height="18" viewBox="0 0 18 18"><path d="M0 10h18v8H0z" fill="#fff"/><path d="M0 10h4v3H0zM14 10h4v3h-4zM4 13h4v3H4zM10 13h4v3h-4zM0 16h4v2H0zM7 16h4v2H7zM14 16h4v2h-4z" fill="#333"/><use href="#i-ball" x="1" y="-1" width="16" height="16"/></svg></button>
			<i class="caret grey"></i>
			<button aria-label="视图设定"><svg width="18" height="18" viewBox="0 0 18 18"><path d="M.5 2h17v11H.5z" fill="#ccc" stroke="#444" stroke-width="1.300"/><path d="M9 13v3M5 16.500h8" stroke="#444" stroke-width="1.600"/></svg></button>
			<i class="caret grey"></i>
		</div>
		<div class="mdi">
			<button aria-label="左面板"><svg width="16" height="16" viewBox="0 0 16 16"><path d="M2.500 2h11v12h-11zM2.500 3h11" fill="none" stroke="currentColor"/><path d="M8 4.500v7L3.500 8z" fill="currentColor"/></svg></button>
			<button aria-label="右面板"><svg width="16" height="16" viewBox="0 0 16 16"><path d="M2.500 2h11v12h-11zM2.500 3h11" fill="none" stroke="currentColor"/><path d="M8 4.500v7L12.500 8z" fill="currentColor"/></svg></button>
			<button aria-label="最小化"><svg width="16" height="16" viewBox="0 0 16 16"><path d="M3 13h10" stroke="currentColor" stroke-width="2"/></svg></button>
			<button aria-label="还原"><svg width="16" height="16"><use href="#i-restore"/></svg></button>
			<button aria-label="关闭"><svg width="16" height="16"><use href="#i-close"/></svg></button>
		</div>
	</main>

	<footer>
		<div class="sheet-tabs">
			<div class="steps">
				<button aria-label="第一个"><svg width="10" height="10" viewBox="0 0 10 10"><path d="M1.500 0v10M9 0v10L3 5z"/></svg></button>
				<button aria-label="上一个"><svg width="10" height="10" viewBox="0 0 10 10"><path d="M8 0v10L2 5z"/></svg></button>
				<button aria-label="下一个"><svg width="10" height="10" viewBox="0 0 10 10"><path d="M2 0v10l6-5z"/></svg></button>
				<button aria-label="最后一个"><svg width="10" height="10" viewBox="0 0 10 10"><path d="M8.500 0v10M1 0v10l6-5z"/></svg></button>
			</div>
			<button class="sheet active">模型</button>
			<button class="sheet">3D 视图</button>
			<button class="sheet study">运动算例 1</button>
		</div>
		<div class="layerbar">
			<i class="dots"></i>
			<select aria-label="图层" disabled><option></option></select>
			<button class="layers" aria-label="图层属性" disabled><svg width="18" height="14" viewBox="0 0 18 14" fill="#e8e8e8" stroke="#bbb"><path d="M1 10l7 3.500L17 10v-2L6 6z"/><path d="M1 7l7 3.500L17 7V5L6 3z"/><path d="M1 4l7 3.500L17 4 11 .5z"/></svg></button>
			<div class="layer-rest"></div>
		</div>
		<div class="status">
			<span class="version">SOLIDWORKS 2023 SP0.1</span>
			<span class="pos-x">-156.1mm</span>
			<span class="pos-y">68.66mm</span>
			<span class="pos-z">0mm</span>
			<span class="defined">完全定义</span>
			<span class="editing">在编辑 草图1</span>
			<svg width="8" height="14"><use href="#i-traffic"/></svg>
			<button class="custom">自定义<i class="caret up"></i></button>
			<svg class="tag" width="18" height="14" viewBox="0 0 18 14" fill="#fff" stroke="#333"><path d="M1 3l5-2 11 2-3 7-5 3.500L2 7z"/><path d="M2 5l7 5 1 3M9 10l7-5M5 3l5 3 2-2" fill="none"/></svg>
		</div>
	</footer>

	<div class="ime">
		<svg class="ime-logo" width="30" height="32" viewBox="0 0 30 32"><path d="M1 5L25 1l4 25-24 5z" fill="#f0501e"/><path d="M22 7Q9 5 8 10t9 5q7 2 4 6T8 24" fill="none" stroke="#fff" stroke-width="4"/></svg>
		<b>英</b>
		<svg width="14" height="16" viewBox="0 0 14 16" fill="#0b6fd8"><circle cx="3" cy="4" r="2"/><path d="M8 7h4q1 5-4 7 2-3 0-4z"/></svg>
		<svg width="14" height="16" viewBox="0 0 14 16"><rect x="4" y="0" width="6" height="10" rx="3" fill="#0b6fd8"/><path d="M1.500 6q0 6 5.500 6t5.500-6M7 12v3" fill="none" stroke="#0b6fd8" stroke-width="1.800"/></svg>
		<svg width="16" height="14" viewBox="0 0 16 14" fill="none" stroke="#0b6fd8" stroke-width="1.800"><rect x="1" y="1" width="14" height="12" rx="2"/><path d="M1 5h14M4 9h8M5 2v6M10 2v6"/></svg>
		<svg width="18" height="18" viewBox="0 0 18 18"><circle cx="5" cy="7" r="3" fill="#f0605a"/><circle cx="14" cy="4" r="3" fill="#f0605a"/><circle cx="14" cy="10" r="3" fill="#a060e0"/><circle cx="5" cy="13" r="3" fill="#5a7af0"/><circle cx="10" cy="15" r="3" fill="#a060e0"/></svg>
		<svg width="14" height="14" viewBox="0 0 14 14" fill="#0b6fd8"><rect width="6" height="6" rx="1"/><rect x="8" width="6" height="6" rx="3"/><rect y="8" width="6" height="6" rx="1"/><rect x="8" y="8" width="6" height="6" rx="1"/></svg>
		<svg width="20" height="20" viewBox="0 0 20 20"><circle cx="9" cy="10" r="9" fill="#fde9df"/><path d="M1 7q7-3 15-1l-2 7q-6 3-12-1z" fill="#d65a20"/><circle cx="6" cy="10" r="1.500"/><circle cx="12" cy="9" r="1.500"/><path d="M18 3l1 3-2 2-1-3z" fill="#f5d020"/></svg>
	</div>
	<div class="watermark">CSDN @山涧果子</div>
</body>
</html>
```
FILE: styles.css
```css
* {
	box-sizing: border-box;
}

body {
	margin: 0;
	height: 100vh;
	display: flex;
	flex-direction: column;
	overflow: hidden;
	background: #f7f7f7;
	color: #000;
	font: 12px/16px "Open Sans", "Noto Sans CJK SC", sans-serif;
}

button {
	margin: 0;
	padding: 0;
	border: 0;
	background: none;
	color: inherit;
	font: inherit;
}

svg {
	display: block;
	flex: none;
	overflow: visible;
}

.defs {
	position: absolute;
	width: 0;
	height: 0;
}

/* small drop-down arrow */
.caret {
	flex: none;
	width: 6px;
	height: 4px;
	background: #333;
	clip-path: polygon(0 0, 100% 0, 50% 100%);
}

.caret.grey {
	background: #80838b;
}

.caret.up {
	clip-path: polygon(50% 0, 100% 100%, 0 100%);
}

/* Menu bar */
.menubar {
	flex: none;
	display: flex;
	align-items: center;
	height: 35px;
	border-top: 1px solid #bdbdbd;
	border-bottom: 1px solid #bdbdbd;
}

.logo {
	display: flex;
	align-items: center;
	width: 135px;
	padding-left: 4px;
	gap: 3px;
	color: #d8352a;
	font-size: 14px;
	font-style: italic;
}

.menus {
	display: flex;
	gap: 4px;
	padding-left: 2px;
}

.menus button {
	width: 50px;
	height: 28px;
	border: 1px solid transparent;
	font-size: 13px;
	white-space: nowrap;
}

.menus small,
.cmd small,
.doc-title small {
	font-size: 11px;
	line-height: 11px;
}

.menus .hover {
	background: #fff;
	border-color: #a8a8a8;
}

.pin {
	display: flex;
	align-items: center;
	width: 31px;
	height: 33px;
	padding-left: 12px;
	border-right: 1px solid #bdbdbd;
}

.quick,
.splits,
.split,
.extras {
	display: flex;
	align-items: center;
}

.quick {
	padding-left: 20px;
}

.icon {
	display: flex;
	justify-content: center;
	width: 20px;
}

.home {
	margin-right: 10px;
}

.splits {
	gap: 5px;
}

.split {
	gap: 8px;
	width: 39px;
}

.dim .caret {
	background: #aaa;
}

.select-tool {
	display: flex;
	height: 30px;
	border: 1px solid #6f6f6f;
}

.select-tool button {
	display: flex;
	align-items: center;
	justify-content: center;
	width: 12px;
}

.select-tool .on {
	width: 31px;
	background: #b0b0b0;
	border-right: 1px solid #6f6f6f;
}

.extras {
	gap: 10px;
	padding-left: 4px;
}

.doc-title {
	flex: 1;
	text-align: center;
	font: 13px/16px "Noto Sans CJK SC", sans-serif;
}

.search {
	display: flex;
	align-items: center;
	width: 202px;
	height: 23px;
	padding: 0 4px 0 6px;
	gap: 6px;
	background: #fff;
	border: 1px solid #b8b8b8;
}

.search input {
	flex: 1;
	min-width: 0;
	padding: 0;
	border: 0;
	outline: 0;
	background: none;
	font: inherit;
	font-size: 13px;
}

.search input::placeholder {
	color: #666;
	opacity: 1;
}

.win-user {
	display: flex;
	gap: 16px;
	padding: 0 18px 0 11px;
}

.win-ctl {
	display: flex;
	gap: 20px;
	padding-right: 13px;
	color: #333;
}

/* Ribbon */
.ribbon {
	flex: none;
	display: flex;
	height: 81px;
	padding: 1px 0 1px 6px;
	position: relative;
	border-right: 1px solid #808080;
}

.ribbon hr {
	flex: none;
	width: 1px;
	height: 78px;
	margin: 0 1px 0 0;
	border: 0;
	background: #bdbdbd;
}

.cmd {
	flex: none;
	display: flex;
	flex-direction: column;
	align-items: center;
	position: relative;
	width: 49px;
	height: 78px;
	padding: 6px 4px 0;
	font-size: 13px;
	line-height: 13px;
	text-align: center;
}

.cmd span {
	height: 26px;
	margin-top: 1px;
}

.cmd > .caret {
	margin-top: 14px;
}

.cmd.on,
.exit > button:first-child {
	background: #b0b0b0;
	border: 1px solid #6b6b6b;
	padding: 5px 3px 0;
}

.cmd + hr {
	margin-left: 1px;
}

.exit {
	padding: 0;
}

.exit button {
	display: flex;
	flex-direction: column;
	align-items: center;
	width: 49px;
	height: 59px;
	line-height: 13px;
}

.exit .drop {
	height: 19px;
	justify-content: center;
	border: 1px solid #8a8a8a;
	border-top: 0;
}

.cmd.off {
	color: #b0b0b0;
}

.cmd.off .caret {
	background: #999;
}

.cmd.relations {
	width: 66px;
}

.cmd.instant {
	width: 60px;
	border-right: 0;
	font-family: "Noto Sans CJK SC", sans-serif;
}

.sketch-tools {
	display: grid;
	grid-template-columns: 20px 6px 20px 6px 20px 6px 20px;
	grid-auto-rows: 26px;
	align-items: center;
	column-gap: 7px;
	padding: 0 4px 0 3px;
}

.sketch-tools .letter {
	color: #f7f7f7;
	-webkit-text-stroke: 1px #2f7ea3;
	font: bold 22px/24px "Liberation Serif", serif;
}

.cmd-list {
	display: flex;
	flex-direction: column;
	width: 145px;
	padding: 0 6px 0 3px;
	font-size: 13px;
}

.cmd-list button {
	display: flex;
	align-items: center;
	height: 26px;
	gap: 7px;
}

.cmd-list .caret {
	margin-left: auto;
}

.fold {
	position: absolute;
	right: 7px;
	bottom: 8px;
}

/* Workspace */
.workspace {
	flex: 1;
	min-height: 0;
	display: flex;
	flex-direction: column;
	position: relative;
	background: #c4c8d3;
	border-top: 1px solid #808080;
	border-bottom: 1px solid #808080;
}

.tabs {
	flex: none;
	display: flex;
	height: 22px;
}

.tabs button {
	min-width: 56px;
	padding: 0 7px;
	background: #d2d2d2;
	border-right: 1px solid #808080;
	border-bottom: 1px solid #808080;
	color: #222;
	font: 13px/19px "Noto Sans CJK SC", sans-serif;
}

.tabs .active {
	background: #f7f7f7;
	border-bottom-color: #f7f7f7;
}

.panes {
	flex: 1;
	min-height: 0;
	display: flex;
}

.notebar {
	display: flex;
	flex-direction: column;
	align-items: center;
	gap: 8px;
	width: 32px;
	padding-top: 17px;
	background: #f7f7f7 radial-gradient(circle, #999 1px, transparent 1px) 3px 2px / 4px 4px repeat-x;
}

.notebar::after {
	content: "";
	align-self: stretch;
	margin: 3px 2px 0 0;
	border-top: 1px solid #808080;
}

.notebar .off {
	opacity: .3;
}

.manager {
	display: flex;
	flex-direction: column;
	width: 243px;
	padding: 4px 2px 0 0;
	background: #f7f7f7;
	border-left: 1px solid #bdbdbd;
	border-right: 1px solid #808080;
}

.grip {
	display: flex;
	align-items: center;
	justify-content: center;
	height: 16px;
	border-top: 1px solid #bdbdbd;
	border-bottom: 1px solid #bdbdbd;
}

.manager-tabs {
	display: flex;
	height: 26px;
	margin-top: 4px;
	padding-left: 1px;
	border-bottom: 1px solid #808080;
}

.manager-tabs button {
	display: flex;
	align-items: center;
	justify-content: center;
	width: 40px;
	background: #d2d2d2;
	border: 1px solid #808080;
	border-width: 1px 1px 0 0;
}

.manager-tabs .active {
	height: 26px;
	background: #f7f7f7;
}

.manager-tabs .more {
	margin-left: auto;
	width: 20px;
	background: none;
	border: 0;
}

.filter {
	display: flex;
	align-items: center;
	height: 26px;
	margin: 0 3px 0 4px;
	padding-left: 2px;
	border: 1px solid #bdbdbd;
}

.filter input {
	flex: 1;
	min-width: 0;
	border: 0;
	outline: 0;
	background: none;
	font: inherit;
}

.tree {
	margin: 0;
	padding: 0;
	list-style: none;
}

.tree li {
	display: flex;
	align-items: center;
	gap: 5px;
	height: 22px;
	padding-left: 26px;
	position: relative;
	white-space: nowrap;
}

.tree .root {
	padding-left: 3px;
	font-family: "DejaVu Sans", "Noto Sans CJK SC", sans-serif;
}

.tree .open::before {
	content: "";
	position: absolute;
	left: 9px;
	top: 5px;
	width: 5px;
	height: 8px;
	background: #555;
	clip-path: polygon(0 0, 100% 50%, 0 100%);
}

.rollback {
	height: 3px;
	background: #b3b5ce;
}

.manager-foot {
	height: 3px;
	margin-top: auto;
	border-top: 1px solid #bdbdbd;
}

.viewport {
	flex: 1;
	position: relative;
}

.handle {
	position: absolute;
	left: -1px;
	top: 382px;
	display: flex;
	align-items: center;
	justify-content: center;
	width: 9px;
	height: 39px;
	background: #f7f7f7;
	border: 1px solid #808080;
	border-left: 0;
}

.sketch {
	position: absolute;
	left: 465px;
	top: 211px;
}

.dim-text {
	font: 15px "Liberation Serif", serif;
	fill: #222;
}

.triad {
	position: absolute;
	left: 12px;
	bottom: 2px;
	font: bold 13px/18px "Noto Sans CJK SC", sans-serif;
}

.triad svg {
	margin-left: 13px;
}

.triad text {
	font: 9px "Liberation Sans", sans-serif;
}

.confirm {
	position: absolute;
	right: 33px;
	top: 10px;
}

.taskpane {
	position: absolute;
	right: 0;
	top: 29px;
	display: flex;
	flex-direction: column;
	width: 26px;
	border: 1px solid #808080;
	border-right: 0;
	border-bottom: 0;
}

.taskpane button {
	display: flex;
	align-items: center;
	justify-content: center;
	height: 24px;
	background: #d2d2d2;
	border-bottom: 1px solid #808080;
}

.taskpane .active {
	background: #f7f7f7;
}

.hud {
	position: absolute;
	left: 275px;
	right: 5px;
	top: 6px;
	display: flex;
	align-items: center;
	justify-content: center;
	gap: 8px;
	pointer-events: none;
}

.hud .faded {
	opacity: .5;
}

.mdi {
	position: absolute;
	right: 12px;
	top: 7px;
	display: flex;
	gap: 10px;
	color: #85888f;
}

/* Bottom bars */
footer {
	flex: none;
	border-bottom: 1px solid #b5cfd0;
}

.sheet-tabs {
	display: flex;
	height: 15px;
	padding-left: 32px;
}

.steps {
	display: flex;
	width: 67px;
	padding: 1px 1px 0;
	background: #8a8a8a;
}

.steps button {
	flex: 1;
	display: flex;
	align-items: center;
	justify-content: center;
	background: #aaa;
	border-right: 1px solid #8a8a8a;
}

.steps path {
	fill: #888;
	stroke: #888;
}

.sheet {
	padding: 0 7px 4px;
	background: #d2d2d2;
	border-right: 1px solid #808080;
	font: 13px/11px "Noto Sans CJK SC", sans-serif;
}

.sheet.active {
	width: 48px;
	background: #f7f7f7;
}

.study {
	padding-right: 16px;
}

.layerbar {
	display: flex;
	align-items: center;
	height: 33px;
	padding-left: 3px;
	border-bottom: 1px solid #808080;
}

.dots {
	width: 4px;
	height: 28px;
	background: radial-gradient(circle, #999 1px, transparent 1px) 0 0 / 4px 4px;
}

.layerbar select {
	appearance: none;
	width: 98px;
	height: 25px;
	margin-left: 9px;
	border: 1px solid #e0e0e0;
	background: #fafafa;
}

.layers {
	margin-left: 5px;
}

/* chevron of the disabled list */
.layers::before {
	content: "";
	position: absolute;
	width: 6px;
	height: 6px;
	margin: 2px 0 0 -26px;
	border: solid #bbb;
	border-width: 0 1px 1px 0;
	rotate: 45deg;
}

.layer-rest {
	flex: 1;
	height: 31px;
	margin-left: 11px;
	border-left: 1px solid #808080;
}

.status {
	display: flex;
	align-items: center;
	height: 19px;
	padding: 0 1px;
	white-space: nowrap;
}

.version {
	margin-right: auto;
}

.pos-x {
	width: 89px;
}

.pos-y {
	width: 73px;
}

.pos-z {
	width: 31px;
}

.defined {
	width: 66px;
}

.editing {
	width: 96px;
}

.custom {
	display: flex;
	align-items: center;
	justify-content: flex-end;
	gap: 17px;
	width: 154px;
	height: 18px;
	margin: 0 26px 0 5px;
	border-left: 1px solid #bdbdbd;
}

/* Input method bar and watermark lie over the window corner */
.ime {
	position: fixed;
	right: 1px;
	bottom: 17px;
	display: flex;
	align-items: center;
	gap: 9px;
	width: 170px;
	height: 26px;
	background: #fff;
	border: 1px solid #b5c9e3;
}

.ime-logo {
	margin: 0 -3px 0 -31px;
}

.ime b {
	color: #0b6fd8;
	font-size: 13px;
}

.watermark {
	position: fixed;
	right: 7px;
	bottom: 12px;
	color: rgba(170, 170, 170, .65);
	font: 35px/40px "Liberation Sans", "Noto Sans CJK SC", sans-serif;
	text-shadow: 1px 1px 1px rgba(255, 255, 255, .8), -1px -1px 1px rgba(120, 120, 120, .3);
}
```
